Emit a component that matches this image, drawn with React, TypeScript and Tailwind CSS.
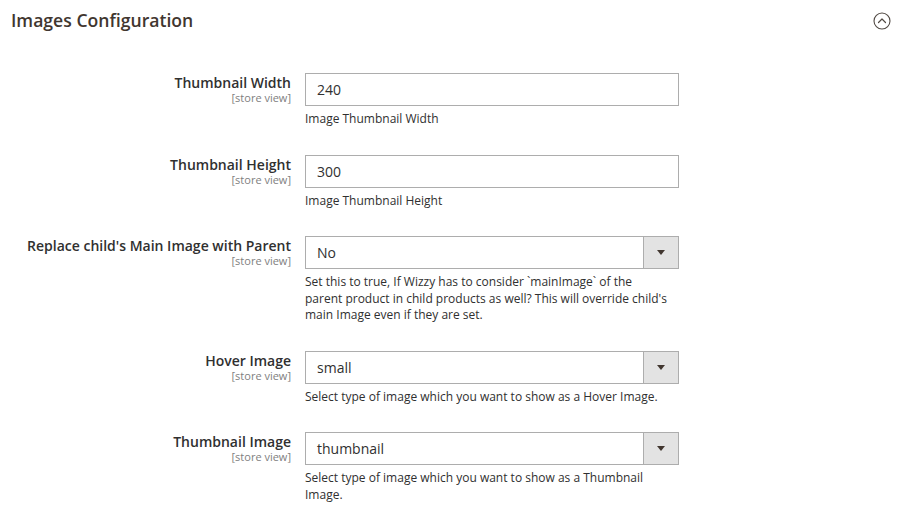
import React from "react";

type Row = {
  label: string;
  value: string;
  select?: boolean;
  note: string;
};

const rows: Row[] = [
  { label: "Thumbnail Width", value: "240", note: "Image Thumbnail Width" },
  { label: "Thumbnail Height", value: "300", note: "Image Thumbnail Height" },
  {
    label: "Replace child's Main Image with Parent",
    value: "No",
    select: true,
    note: "Set this to true, If Wizzy has to consider `mainImage` of the parent product in child products as well? This will override child's main Image even if they are set.",
  },
  {
    label: "Hover Image",
    value: "small",
    select: true,
    note: "Select type of image which you want to show as a Hover Image.",
  },
  {
    label: "Thumbnail Image",
    value: "thumbnail",
    select: true,
    note: "Select type of image which you want to show as a Thumbnail Image.",
  },
];

const FieldRow = ({ row }: { row: Row }) => {
  return (
    <div className="flex pb-[27px]">
      {/* label column */}
      <div className="w-[291px] shrink-0 text-right pt-[1px]">
        <div className="text-[14px] leading-[18px] font-semibold text-[#303030]">
          {row.label}
        </div>
        <div className="text-[11px] leading-[12px] text-[#808080]">[store view]</div>
      </div>

      {/* control column */}
      <div className="ml-[14px] w-[374px]">
        <div className="flex h-[33px] items-stretch border border-[#adadad] bg-white">
          <div className="flex flex-1 items-center pl-[11px] text-[14px] text-[#303030]">
            {row.value}
          </div>
          {row.select && (
            <div className="flex w-[35px] items-center justify-center border-l border-[#adadad] bg-[#e3e3e3]">
              <svg width="8" height="5" viewBox="0 0 8 5">
                <path d="M0 0h8L4 5z" fill="#41362f" />
              </svg>
            </div>
          )}
        </div>
        <p className="mt-[5px] w-[364px] text-[12px] leading-[16.5px] text-[#303030]">{row.note}</p>
      </div>
    </div>
  );
};

export default function App() {
  return (
    <div
      className="h-[515px] w-[905px] overflow-hidden bg-white"
      style={{ fontFamily: '"Open Sans", "Liberation Sans", sans-serif' }}
    >
      <div className="flex h-[41px] items-center justify-between pl-[11px] pr-[14px]">
        <h2 className="text-[17.6px] font-semibold text-[#41362f]">
          Images Configuration
        </h2>
        <svg width="18" height="18" viewBox="0 0 18 18" fill="none">
          <circle cx="9" cy="9" r="8" stroke="#514943" strokeWidth="1.1" />
          <path
            d="M5.5 10.5L9 7l3.5 3.5"
            stroke="#514943"
            strokeWidth="1.2"
            strokeLinecap="round"
            strokeLinejoin="round"
          />
        </svg>
      </div>

      <div className="pt-[32px]">
        {rows.map((row) => (
          <FieldRow key={row.label} row={row} />
        ))}
      </div>
    </div>
  );
}
